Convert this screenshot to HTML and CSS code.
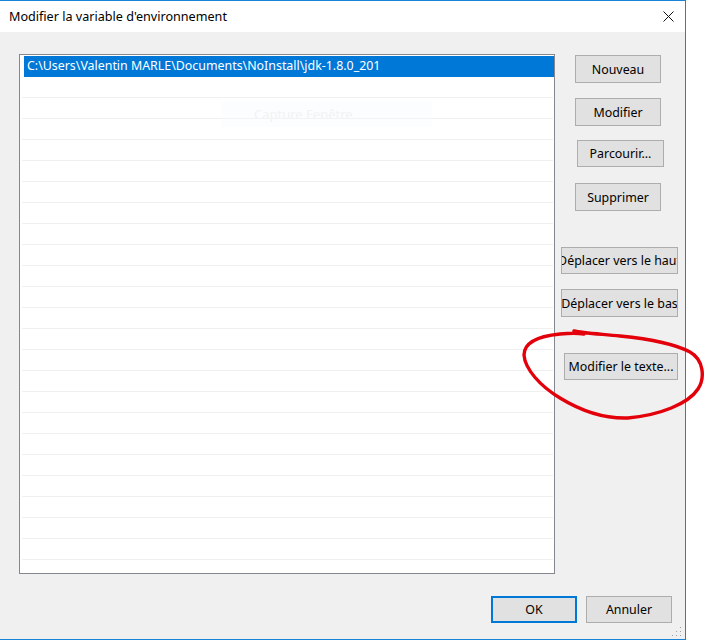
FILE: index.html
```html
<!DOCTYPE html>
<html lang="fr">
<head>
<meta charset="utf-8">
<title>Modifier la variable d'environnement</title>
<link rel="stylesheet" href="styles.css">
</head>
<body>
<div class="window">
  <div class="titlebar">
    <span class="title">Modifier la variable d'environnement</span>
    <svg class="close" width="11" height="11" viewBox="0 0 11 11"><path d="M0.5 0.5L10.5 10.5M10.5 0.5L0.5 10.5" stroke="#111" stroke-width="1" fill="none"/></svg>
  </div>
  <div class="client">
    <div class="content">
      <div class="list">
        <div class="row sel">C:\Users\Valentin MARLE\Documents\NoInstall\jdk-1.8.0_201</div>
        <div class="row"></div><div class="row"></div><div class="row"></div><div class="row"></div>
        <div class="row"></div><div class="row"></div><div class="row"></div><div class="row"></div>
        <div class="row"></div><div class="row"></div><div class="row"></div><div class="row"></div>
        <div class="row"></div><div class="row"></div><div class="row"></div><div class="row"></div>
        <div class="row"></div><div class="row"></div><div class="row"></div><div class="row"></div>
        <div class="row"></div><div class="row"></div><div class="row"></div><div class="row"></div>
        <div class="ghost">Capture Fenêtre</div>
      </div>
      <div class="actions">
        <button class="btn b-nouveau">Nouveau</button>
        <button class="btn b-modifier">Modifier</button>
        <button class="btn b-parcourir">Parcourir...</button>
        <button class="btn b-supprimer">Supprimer</button>
        <button class="btn b-haut">Déplacer vers le haut</button>
        <button class="btn b-bas">Déplacer vers le bas</button>
        <button class="btn b-texte">Modifier le texte...</button>
      </div>
    </div>
    <div class="footer">
      <button class="btn ok">OK</button>
      <button class="btn">Annuler</button>
    </div>
    <svg class="grip" width="10" height="10" viewBox="0 0 10 10">
      <rect x="8" y="0" width="1" height="1" fill="#a0a0a0"/>
      <rect x="8" y="4" width="1" height="1" fill="#a0a0a0"/>
      <rect x="4" y="4" width="1" height="1" fill="#a0a0a0"/>
      <rect x="8" y="8" width="1" height="1" fill="#a0a0a0"/>
      <rect x="4" y="8" width="1" height="1" fill="#a0a0a0"/>
      <rect x="0" y="8" width="1" height="1" fill="#a0a0a0"/>
    </svg>
  </div>
</div>
<svg class="mark" width="190" height="105" viewBox="515 320 190 105">
  <path d="M574 331 C 582 333, 600 334, 620 336 C 650 339, 675 344, 690 352 C 704 360, 705 378, 698 389 C 688 404, 660 415, 628 418 C 600 419, 578 409, 560 398 C 540 386, 525 369, 524 355 C 524 342, 540 336, 560 334 C 570 333, 578 333, 584 334" fill="none" stroke="#e3000b" stroke-width="3.4" stroke-linecap="round" stroke-linejoin="round"/>
</svg>
</body>
</html>
```

FILE: styles.css
```css
* {
  box-sizing: border-box;
}

html,
body {
  margin: 0;
  padding: 0;
  background: #ffffff;
}

body {
  position: relative;
  width: 705px;
  height: 642px;
  overflow: hidden;
  font-family: "Segoe UI", "Noto Sans", "Open Sans", sans-serif;
  font-size: 12.4px;
  color: #000000;
}

.window {
  width: 686px;
  height: 640px;
  border: 1px solid #1883d7;
  border-left: none;
  background: #f0f0f0;
  display: flex;
  flex-direction: column;
}

.titlebar {
  height: 31px;
  flex: none;
  background: #ffffff;
  display: flex;
  align-items: center;
  justify-content: space-between;
  padding: 0 11px 0 9px;
}

.title {
  font-size: 12.6px;
  white-space: nowrap;
}

.close {
  display: block;
}

.client {
  flex: 1;
  position: relative;
  padding: 22px 0 0 19px;
}

.content {
  display: flex;
  align-items: flex-start;
}

.list {
  position: relative;
  width: 536px;
  height: 520px;
  border: 1px solid #828790;
  background: #ffffff;
  padding-top: 1px;
  overflow: hidden;
}

.row {
  height: 21px;
  margin: 0 1px 0 2px;
  border-bottom: 1px solid #f0f0f0;
}

.row.sel {
  margin-left: 4px;
  margin-right: 0;
  background: #0078d7;
  border-bottom-color: #0078d7;
  color: #ffffff;
  line-height: 20px;
  padding-left: 3px;
  white-space: nowrap;
}

.ghost {
  position: absolute;
  left: 202px;
  top: 47px;
  width: 210px;
  height: 25px;
  background: rgba(244, 248, 252, 0.35);
  color: #f1f3f5;
  font-size: 13px;
  line-height: 25px;
  padding-left: 32px;
}

.actions {
  margin-left: 6px;
  display: flex;
  flex-direction: column;
  align-items: flex-start;
}

.btn {
  display: flex;
  align-items: center;
  justify-content: center;
  overflow: hidden;
  white-space: nowrap;
  width: 86px;
  height: 28px;
  padding: 0;
  background: #e1e1e1;
  border: 1px solid #adadad;
  font: inherit;
  color: #000000;
}

.b-nouveau {
  margin: 1px 0 0 14px;
}

.b-modifier {
  margin: 15px 0 0 14px;
}

.b-parcourir {
  margin: 14px 0 0 16px;
  width: 87px;
  height: 27px;
}

.b-supprimer {
  margin: 16px 0 0 14px;
}

.b-haut {
  margin: 36px 0 0 0;
  width: 117px;
  height: 27px;
}

.b-bas {
  margin: 15px 0 0 0;
  width: 117px;
}

.b-texte {
  margin: 36px 0 0 3px;
  width: 114px;
  height: 27px;
}

.footer {
  display: flex;
  justify-content: flex-end;
  gap: 9px;
  margin-top: 22px;
  padding-right: 13px;
}

.footer .btn {
  height: 27px;
}

.footer .ok {
  border: 2px solid #0078d7;
}

.grip {
  position: absolute;
  right: 3px;
  bottom: 2px;
}

.mark {
  position: absolute;
  left: 515px;
  top: 320px;
  pointer-events: none;
}
```
